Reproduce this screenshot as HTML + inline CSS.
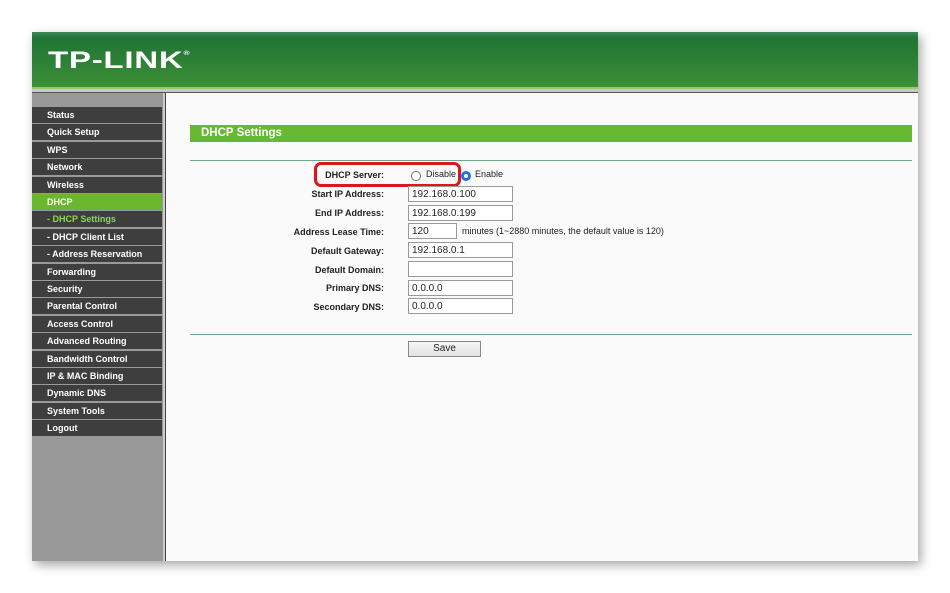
<!DOCTYPE html>
<html><head><meta charset="utf-8"><style>
*{margin:0;padding:0;box-sizing:border-box}
body{width:950px;height:593px;background:#fff;position:relative;overflow:hidden;font-family:"Liberation Sans",Arial,sans-serif}
#frame{position:absolute;left:32px;top:32px;width:886px;height:529px;background:#fafafa;box-shadow:3px 4px 10px rgba(0,0,0,.35)}
#hdr{position:absolute;left:0;top:0;width:886px;height:56px;background:linear-gradient(#3e8a5a 0,#217535 6px,#2a7e35 25px,#3d9037 55px)}
#hdr .l{position:absolute;left:16px;top:15px;color:#fff;font-weight:bold;font-size:24px;letter-spacing:0.5px;transform:scaleX(1.38);transform-origin:left}
#hdr .l sup{font-size:6px;vertical-align:top;position:relative;top:4px}
#line1{position:absolute;left:0;top:55px;width:886px;height:2px;background:#8fcf6a}
#band{position:absolute;left:0;top:57px;width:886px;height:4px;background:#c8c8c8;border-bottom:1px solid #555}
#side{position:absolute;left:0;top:61px;width:131px;height:468px;background:#999}
#side .b{position:absolute;left:131px;top:0;width:3px;height:468px;background:#ccc;border-right:1px solid #444}
.m{position:absolute;left:0;width:130px;height:16px;background:#3e3e3e;color:#fff;font-weight:bold;font-size:9px;line-height:16px;padding-left:15px}
.m.a{background:#6ab72f}
.m.s{color:#fff}
.m.sa{color:#8fd84a}
#bar{position:absolute;left:158px;top:93px;width:722px;height:17px;background:#67b932;color:#fff;font-weight:bold;font-size:11.5px;line-height:17px;padding-left:11px}
.hr{position:absolute;left:158px;width:722px;height:1px;background:#6ea88a}
.lb{position:absolute;right:534px;font-weight:bold;font-size:9px;color:#222}
.in{position:absolute;left:376px;width:105px;height:16px;border:1px solid #999;background:#fff;font-size:10px;padding:2px 0 0 3px;line-height:11px;color:#222}
.t{position:absolute;font-size:9px;color:#222}
.rd{position:absolute;width:10px;height:10px;border-radius:50%;border:1px solid #777;background:#fff}
</style></head><body>
<div id="frame">
<div id="hdr"><div class="l">TP-LINK<sup>®</sup></div></div>
<div id="line1"></div><div id="band"></div>
<div id="side"><div class="b"></div>
<div class="m" style="top:14px">Status</div>
<div class="m" style="top:31.4px">Quick Setup</div>
<div class="m" style="top:48.8px">WPS</div>
<div class="m" style="top:66.2px">Network</div>
<div class="m" style="top:83.6px">Wireless</div>
<div class="m a" style="top:101px">DHCP</div>
<div class="m sa" style="top:118.4px">- DHCP Settings</div>
<div class="m s" style="top:135.8px">- DHCP Client List</div>
<div class="m s" style="top:153.2px">- Address Reservation</div>
<div class="m" style="top:170.6px">Forwarding</div>
<div class="m" style="top:188px">Security</div>
<div class="m" style="top:205.4px">Parental Control</div>
<div class="m" style="top:222.8px">Access Control</div>
<div class="m" style="top:240.2px">Advanced Routing</div>
<div class="m" style="top:257.6px">Bandwidth Control</div>
<div class="m" style="top:275px">IP &amp; MAC Binding</div>
<div class="m" style="top:292.4px">Dynamic DNS</div>
<div class="m" style="top:309.8px">System Tools</div>
<div class="m" style="top:327.2px">Logout</div>
</div>
<div id="bar">DHCP Settings</div>
<div class="hr" style="top:128px"></div>
<div class="hr" style="top:302px"></div>
<div style="position:absolute;left:282px;top:130px;width:147px;height:25px;border:3px solid #e0141e;border-radius:7px"></div>
<div class="lb" style="top:138px;right:534px">DHCP Server:</div>
<div class="rd" style="left:379px;top:139px"></div><div class="t" style="left:394px;top:137px">Disable</div>
<div class="rd" style="left:429px;top:139px;border:3px solid #1a73e8"></div><div class="t" style="left:443px;top:137px">Enable</div>
<div class="lb" style="top:157px">Start IP Address:</div><div class="in" style="top:154px">192.168.0.100</div>
<div class="lb" style="top:176px">End IP Address:</div><div class="in" style="top:173px">192.168.0.199</div>
<div class="lb" style="top:195px">Address Lease Time:</div><div class="in" style="top:191px;width:49px">120</div>
<div class="t" style="left:430px;top:194px">minutes (1~2880 minutes, the default value is 120)</div>
<div class="lb" style="top:214px">Default Gateway:</div><div class="in" style="top:210px">192.168.0.1</div>
<div class="lb" style="top:233px">Default Domain:</div><div class="in" style="top:229px"></div>
<div class="lb" style="top:251px">Primary DNS:</div><div class="in" style="top:248px">0.0.0.0</div>
<div class="lb" style="top:270px">Secondary DNS:</div><div class="in" style="top:266px">0.0.0.0</div>
<div style="position:absolute;left:376px;top:309px;width:73px;height:16px;border:1px solid #888;background:linear-gradient(#f6f6f6,#e2e2e2);font-size:10px;text-align:center;line-height:14px;color:#222">Save</div>
</div>
</body></html>
